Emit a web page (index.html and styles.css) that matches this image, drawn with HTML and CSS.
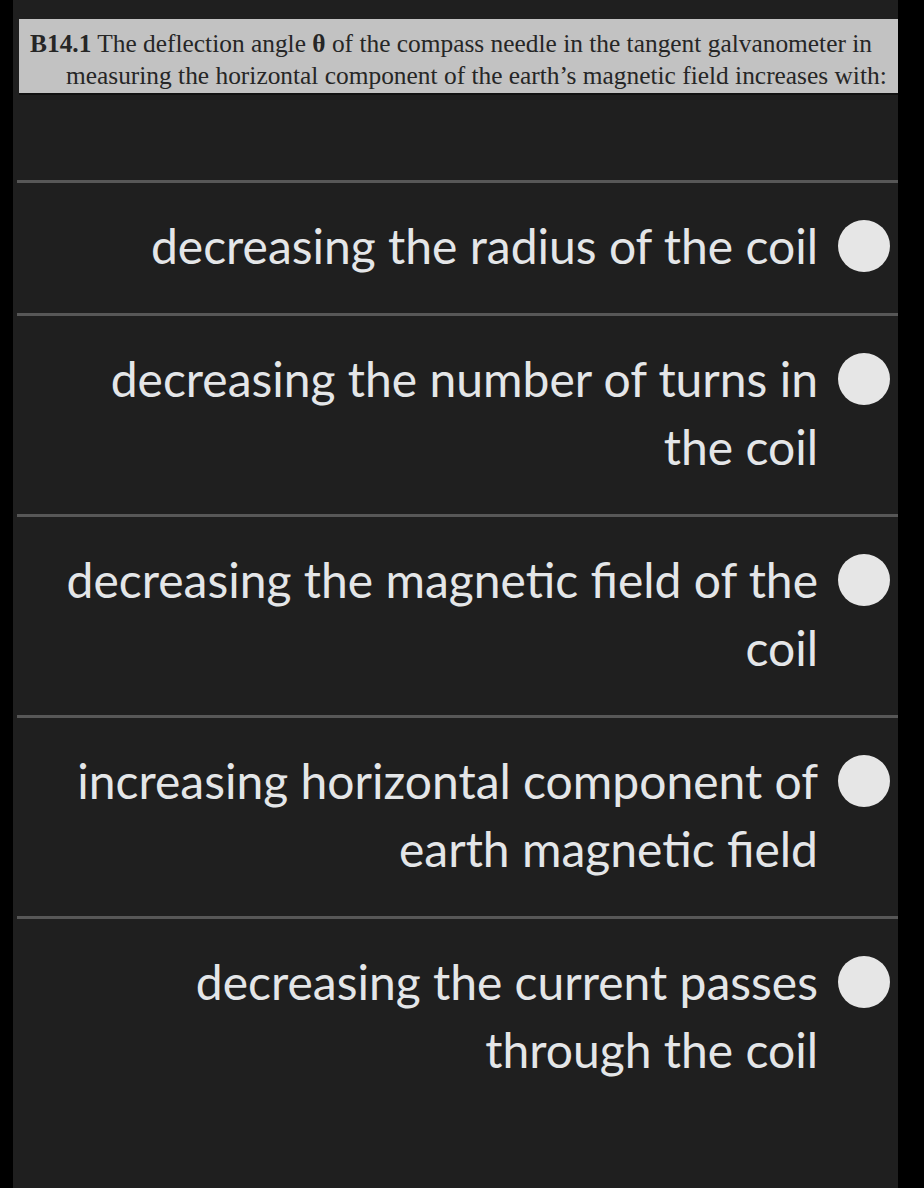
FILE: index.html
```html
<!DOCTYPE html>
<html lang="en">
<head>
<meta charset="utf-8">
<title>Quiz</title>
<link rel="stylesheet" href="styles.css">
</head>
<body>
<main class="screen">
  <header class="question">
    <p class="q-text"><b class="q-num">B14.1</b> The deflection angle <b>θ</b> of the compass needle in the tangent galvanometer in<br>measuring the horizontal component of the earth’s magnetic field increases with:</p>
  </header>
  <ul class="options">
    <li class="option"><span class="opt-label">decreasing the radius of the coil</span><span class="radio"></span></li>
    <li class="option"><span class="opt-label">decreasing the number of turns in the coil</span><span class="radio"></span></li>
    <li class="option"><span class="opt-label">decreasing the magnetic field of the coil</span><span class="radio"></span></li>
    <li class="option"><span class="opt-label">increasing horizontal component of earth magnetic field</span><span class="radio"></span></li>
    <li class="option last"><span class="opt-label">decreasing the current passes through the coil</span><span class="radio"></span></li>
  </ul>
</main>
</body>
</html>
```
FILE: styles.css
```css
html, body {
  margin: 0;
  padding: 0;
  background: #000;
}
.screen {
  margin-left: 13px;
  width: 885px;
  height: 1188px;
  box-sizing: border-box;
  background: #1f1f1f;
  padding-top: 19px;
  overflow: hidden;
}
.question {
  margin-left: 6px;
  height: 76px;
  box-sizing: border-box;
  background: #c2c2c2;
  padding: 8px 4px 0 11px;
  border-bottom: 2px solid #111;
}
.q-text {
  margin: 0;
  font-family: "Liberation Serif", "Times New Roman", serif;
  font-size: 25.4px;
  line-height: 32px;
  color: #262626;
  padding-left: 36px;
  text-indent: -36px;
  white-space: nowrap;
}
.q-num {
  font-weight: bold;
}
.options {
  list-style: none;
  margin: 85px 0 0 0;
  padding: 0;
}
.option {
  display: flex;
  justify-content: flex-end;
  align-items: flex-start;
  border-top: 3px solid #575757;
  margin-left: 4px;
  padding: 29px 8px 33px 28px;
}
.opt-label {
  font-family: Lato, "Open Sans", sans-serif;
  font-size: 48px;
  line-height: 68px;
  color: #e4e6e8;
  text-align: right;
}
.radio {
  flex: none;
  width: 52px;
  height: 52px;
  border-radius: 50%;
  background: #e6e6e6;
  margin: 8px 0 0 20px;
}
```
